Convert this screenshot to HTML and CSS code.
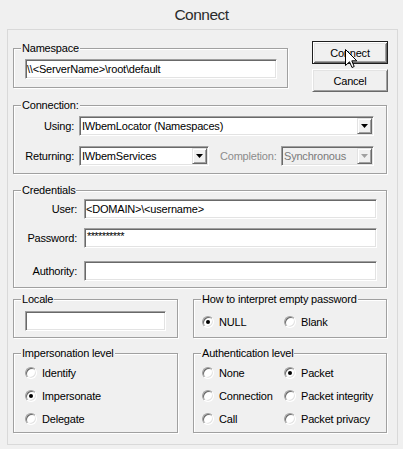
FILE: index.html
```html
<!DOCTYPE html>
<html>
<head>
<meta charset="utf-8">
<title>Connect</title>
<link rel="stylesheet" href="styles.css">
</head>
<body>
<div class="title">Connect</div>
<div class="panel">
  <div class="top">
    <div class="group ns">
      <div class="legend">Namespace</div>
      <div class="field ns-field">\\&lt;ServerName&gt;\root\default</div>
    </div>
    <div class="buttons">
      <div class="btn default">Connect
        <svg class="cursor" width="13" height="20" viewBox="0 0 13 20"><path d="M0.5 0.5 L0.5 16.5 L4.5 12.8 L7 18.5 L9.2 17.5 L6.8 11.8 L11.8 11.8 Z" fill="#fff" stroke="#000" stroke-width="1" stroke-linejoin="miter"/></svg>
      </div>
      <div class="btn">Cancel</div>
    </div>
  </div>

  <div class="group conn">
    <div class="legend">Connection:</div>
    <div class="row using">
      <div class="lbl">Using:</div>
      <div class="select sel-using"><span class="val">IWbemLocator (Namespaces)</span><span class="arrow"><svg width="7" height="4" viewBox="0 0 7 4"><polygon points="0,0 7,0 3.5,4" fill="#000"/></svg></span></div>
    </div>
    <div class="row returning">
      <div class="lbl">Returning:</div>
      <div class="select sel-ret"><span class="val">IWbemServices</span><span class="arrow"><svg width="7" height="4" viewBox="0 0 7 4"><polygon points="0,0 7,0 3.5,4" fill="#000"/></svg></span></div>
      <div class="lbl-dis">Completion:</div>
      <div class="select disabled sel-comp"><span class="val">Synchronous</span><span class="arrow"><svg width="7" height="4" viewBox="0 0 7 4"><polygon points="0,0 7,0 3.5,4" fill="#a0a0a0"/></svg></span></div>
    </div>
  </div>

  <div class="group cred">
    <div class="legend">Credentials</div>
    <div class="row crow user">
      <div class="clbl">User:</div>
      <div class="field cfield">&lt;DOMAIN&gt;\&lt;username&gt;</div>
    </div>
    <div class="row crow pass">
      <div class="clbl">Password:</div>
      <div class="field cfield pw">**********</div>
    </div>
    <div class="row crow auth">
      <div class="clbl">Authority:</div>
      <div class="field cfield"></div>
    </div>
  </div>

  <div class="pair mid">
    <div class="group locale">
      <div class="legend">Locale</div>
      <div class="field loc-field"></div>
    </div>
    <div class="group empty">
      <div class="legend">How to interpret empty password</div>
      <div class="opts two top4">
        <div class="opt"><span class="radio on"></span>NULL</div>
        <div class="opt"><span class="radio"></span>Blank</div>
      </div>
    </div>
  </div>

  <div class="pair low">
    <div class="group imp">
      <div class="legend">Impersonation level</div>
      <div class="opts one">
        <div class="opt"><span class="radio"></span>Identify</div>
        <div class="opt"><span class="radio on"></span>Impersonate</div>
        <div class="opt"><span class="radio"></span>Delegate</div>
      </div>
    </div>
    <div class="group authn">
      <div class="legend">Authentication level</div>
      <div class="opts two">
        <div class="opt"><span class="radio"></span>None</div>
        <div class="opt"><span class="radio on"></span>Packet</div>
        <div class="opt"><span class="radio"></span>Connection</div>
        <div class="opt"><span class="radio"></span>Packet integrity</div>
        <div class="opt"><span class="radio"></span>Call</div>
        <div class="opt"><span class="radio"></span>Packet privacy</div>
      </div>
    </div>
  </div>
</div>
</body>
</html>
```
FILE: styles.css
```css
* { box-sizing: border-box; }

body {
  margin: 0;
  width: 403px;
  height: 449px;
  overflow: hidden;
  background: #f0f0f0;
  font-family: "Liberation Sans", Arial, sans-serif;
  font-size: 11px;
  letter-spacing: -0.2px;
  color: #000;
}

.title {
  height: 29px;
  line-height: 30px;
  text-align: center;
  font-size: 15.5px;
  letter-spacing: -0.5px;
  color: #2b2b2b;
}

.panel {
  margin-left: 7px;
  width: 391px;
  height: 416px;
  border: 1px solid #d9d9d9;
  padding-left: 5px;
}

.top {
  display: flex;
  height: 62px;
}

.group {
  border: 1px solid #a0a0a0;
  box-shadow: inset 1px 1px #fff, 1px 1px #fff;
}

.legend {
  display: block;
  width: fit-content;
  height: 13px;
  line-height: 13px;
  margin: -7px 0 0 7px;
  padding: 0 1px;
  background: #f0f0f0;
  white-space: nowrap;
}

.field {
  background: #fff;
  border: 1px solid;
  border-color: #a0a0a0 #fff #fff #a0a0a0;
  box-shadow: inset 1px 1px #696969, inset -1px -1px #e3e3e3;
  padding-left: 1px;
  line-height: 18px;
  white-space: nowrap;
  overflow: hidden;
}

.ns {
  margin-top: 18px;
  width: 275px;
  height: 40px;
}

.ns-field {
  margin: 4px 0 0 11px;
  width: 252px;
  height: 20px;
}

.buttons {
  margin: 11px 0 0 24px;
  display: flex;
  flex-direction: column;
  gap: 5px;
}

.btn {
  position: relative;
  width: 76px;
  height: 23px;
  display: flex;
  align-items: center;
  justify-content: center;
  background: #f0f0f0;
  border: 1px solid;
  border-color: #fff #696969 #696969 #fff;
  box-shadow: inset 1px 1px #e3e3e3, inset -1px -1px #a0a0a0;
}

.btn.default {
  border-color: #1e1e1e;
  box-shadow: inset 1px 1px #fff, inset -1px -1px #696969, inset 2px 2px #e3e3e3, inset -2px -2px #a0a0a0;
}

.cursor {
  position: absolute;
  left: 32px;
  top: 7px;
}

.row {
  display: flex;
  align-items: center;
}

.conn {
  margin-top: 13px;
  width: 374px;
  height: 69px;
}

.using { margin-top: 4px; }
.returning { margin-top: 10px; padding-right: 12px; }

.lbl {
  width: 60px;
  margin-right: 5px;
  text-align: right;
  white-space: nowrap;
}

.select {
  height: 20px;
  display: flex;
  padding: 1px;
  background: #fff;
  border: 1px solid;
  border-color: #a0a0a0 #fff #fff #a0a0a0;
  box-shadow: inset 1px 1px #696969, inset -1px -1px #e3e3e3;
}

.select .val {
  flex: 1;
  padding-left: 1px;
  line-height: 16px;
  white-space: nowrap;
  overflow: hidden;
}

.arrow {
  width: 15px;
  height: 16px;
  flex: none;
  display: flex;
  align-items: center;
  justify-content: center;
  background: #f0f0f0;
  border: 1px solid;
  border-color: #e3e3e3 #696969 #696969 #e3e3e3;
  box-shadow: inset 1px 1px #fff, inset -1px -1px #a0a0a0;
}

.arrow svg { display: block; }

.sel-using { width: 295px; }
.sel-ret { width: 130px; }

.lbl-dis {
  margin-left: 11px;
  color: #8c8c8c;
  white-space: nowrap;
}

.sel-comp {
  margin-left: auto;
  width: 93px;
}

.select.disabled {
  background: #f0f0f0;
  color: #7a7a7a;
}

.cred {
  margin-top: 16px;
  width: 374px;
  height: 98px;
}

.clbl {
  width: 63px;
  margin-right: 7px;
  text-align: right;
  white-space: nowrap;
}

.cfield {
  width: 293px;
  height: 20px;
}

.user { margin-top: 2px; }
.pass { margin-top: 9px; }
.auth { margin-top: 13px; }

.pw {
  letter-spacing: -0.6px;
  padding-left: 2px;
  line-height: 15px;
}

.pair {
  display: flex;
  gap: 15px;
}

.mid { margin-top: 11px; }
.low { margin-top: 15px; }

.locale { width: 165px; height: 39px; }
.empty { width: 194px; height: 39px; }

.loc-field {
  margin: 5px 0 0 11px;
  width: 141px;
  height: 20px;
}

.imp { width: 165px; height: 80px; }
.authn { width: 194px; height: 80px; }

.opts {
  display: grid;
  margin-top: 1px;
}

.opts.one {
  grid-template-columns: auto;
  margin-left: 11px;
}

.opts.two {
  grid-template-columns: 82px auto;
  margin-left: 8px;
}

.opts.top4 { margin-top: 4px; }

.opt {
  display: flex;
  align-items: center;
  gap: 5px;
  height: 23px;
  white-space: nowrap;
}

.radio {
  position: relative;
  flex: none;
  width: 12px;
  height: 12px;
  border-radius: 50%;
  background: #fff;
  border: 1px solid;
  border-color: #a0a0a0 #fff #fff #a0a0a0;
  box-shadow: inset 1px 1px #696969, inset -1px -1px #e3e3e3;
}

.radio.on::after {
  content: "";
  position: absolute;
  left: 3px;
  top: 3px;
  width: 4px;
  height: 4px;
  border-radius: 50%;
  background: #000;
}
```
